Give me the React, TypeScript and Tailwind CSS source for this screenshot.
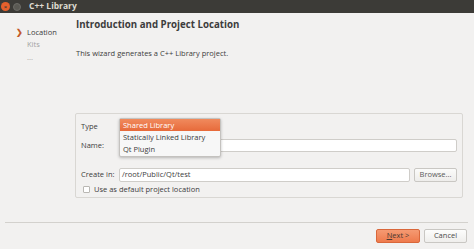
import React from "react";

const font = { fontFamily: '"Open Sans", "Noto Sans", sans-serif' };

function TitleBar() {
  return (
    <div className="h-[13px] bg-[#3c3b37] flex items-center shrink-0">
      <div className="ml-[1px] w-[9px] h-[9px] rounded-full bg-[#e5602c] flex items-center justify-center text-[6px] leading-none text-[#3c3b37] font-bold">
        ×
      </div>
      <div className="ml-[3px] w-[8px] h-[8px] rounded-full bg-[#5a5953] border border-[#6d6c66]" />
      <span className="ml-[8px] text-[8.5px] font-bold text-[#dfdbd2] leading-none">C++ Library</span>
    </div>
  );
}

function Sidebar() {
  return (
    <div className="w-[76px] shrink-0 pt-[13px] text-[7.5px] leading-[12px]">
      <div className="flex items-center">
        <span className="w-[10px] pl-[16px] box-content text-[#c35a2a] font-bold text-[8px]">❯</span>
        <span className="ml-[1px] text-[#3c3c3c]">Location</span>
      </div>
      <div className="pl-[27px] text-[#a3a3a3]">Kits</div>
      <div className="pl-[27px] text-[#a3a3a3] mt-[1px]">...</div>
    </div>
  );
}

function TypeDropdown() {
  return (
    <div className="absolute left-[43px] top-[4px] w-[102px] bg-[#f7f7f7] border border-[#c4c2bf] rounded-[2px] shadow-[0_1px_3px_rgba(0,0,0,0.25)] text-[7.5px] leading-[12px] text-[#3c3c3c] z-10">
      <div className="bg-gradient-to-b from-[#f08a5d] to-[#e76a3a] text-white px-[3px]">Shared Library</div>
      <div className="px-[3px]">Statically Linked Library</div>
      <div className="px-[3px] pb-[1px]">Qt Plugin</div>
    </div>
  );
}

function Field({ label, children }: { label: string; children: React.ReactNode }) {
  return (
    <div className="flex items-center">
      <span className="w-[38px] shrink-0 text-[#3c3c3c]">{label}</span>
      {children}
    </div>
  );
}

function GroupBox() {
  return (
    <div className="relative mt-[55px] w-[388px] h-[85px] -ml-[1px] border border-[#d9d7d3] rounded-[2px] px-[5px] pt-[7px] text-[7.5px]">
      <Field label="Type">
        <div className="h-[12px]" />
      </Field>
      <div className="mt-[6px]">
        <Field label="Name:">
          <div className="flex-1 h-[13px] bg-white border border-[#cfcdc9] rounded-[2px]" />
        </Field>
      </div>
      <div className="mt-[16px]">
        <Field label="Create in:">
          <div className="w-[291px] h-[14px] bg-white border border-[#cfcdc9] rounded-[2px] flex items-center pl-[2px] text-[#3c3c3c]">
            /root/Public/Qt/test
          </div>
          <div className="ml-[4px] w-[43px] h-[14px] bg-gradient-to-b from-[#fbfbfa] to-[#eeedeb] border border-[#c9c7c3] rounded-[2px] flex items-center justify-center text-[#5a5a5a]">
            Browse...
          </div>
        </Field>
      </div>
      <div className="mt-[2px] flex items-center">
        <div className="ml-[2px] w-[7px] h-[7px] bg-white border border-[#b9b7b3] rounded-[1px]" />
        <span className="ml-[4px] text-[#3c3c3c]">Use as default project location</span>
      </div>
      <TypeDropdown />
    </div>
  );
}

export default function App() {
  return (
    <div className="w-[474px] h-[249px] bg-[#f2f1f0] flex flex-col overflow-hidden" style={font}>
      <TitleBar />
      <div className="flex h-[209px]">
        <Sidebar />
        <div className="flex-1">
          <div className="mt-[4px] text-[9.7px] font-bold text-[#3c3c3c] leading-[16px]">
            Introduction and Project Location
          </div>
          <div className="mt-[15px] text-[7.5px] text-[#3c3c3c] leading-[10px]">
            This wizard generates a C++ Library project.
          </div>
          <GroupBox />
        </div>
      </div>
      <div className="ml-[5px] mr-[6px] h-[1px] bg-[#d3d1cd]" />
      <div className="flex justify-end items-center pr-[7px] pt-[6px] gap-[4px] text-[7.5px]">
        <div className="w-[44px] h-[14px] rounded-[2px] border border-[#d9673a] bg-gradient-to-b from-[#f59a72] to-[#ee7a4c] flex items-center justify-center text-[#4a3a33]">
          <span>
            <span className="underline">N</span>ext &gt;
          </span>
        </div>
        <div className="w-[43px] h-[14px] rounded-[2px] border border-[#c9c7c3] bg-gradient-to-b from-[#fdfdfc] to-[#efeeec] flex items-center justify-center text-[#4c4c4c]">
          Cancel
        </div>
      </div>
    </div>
  );
}
